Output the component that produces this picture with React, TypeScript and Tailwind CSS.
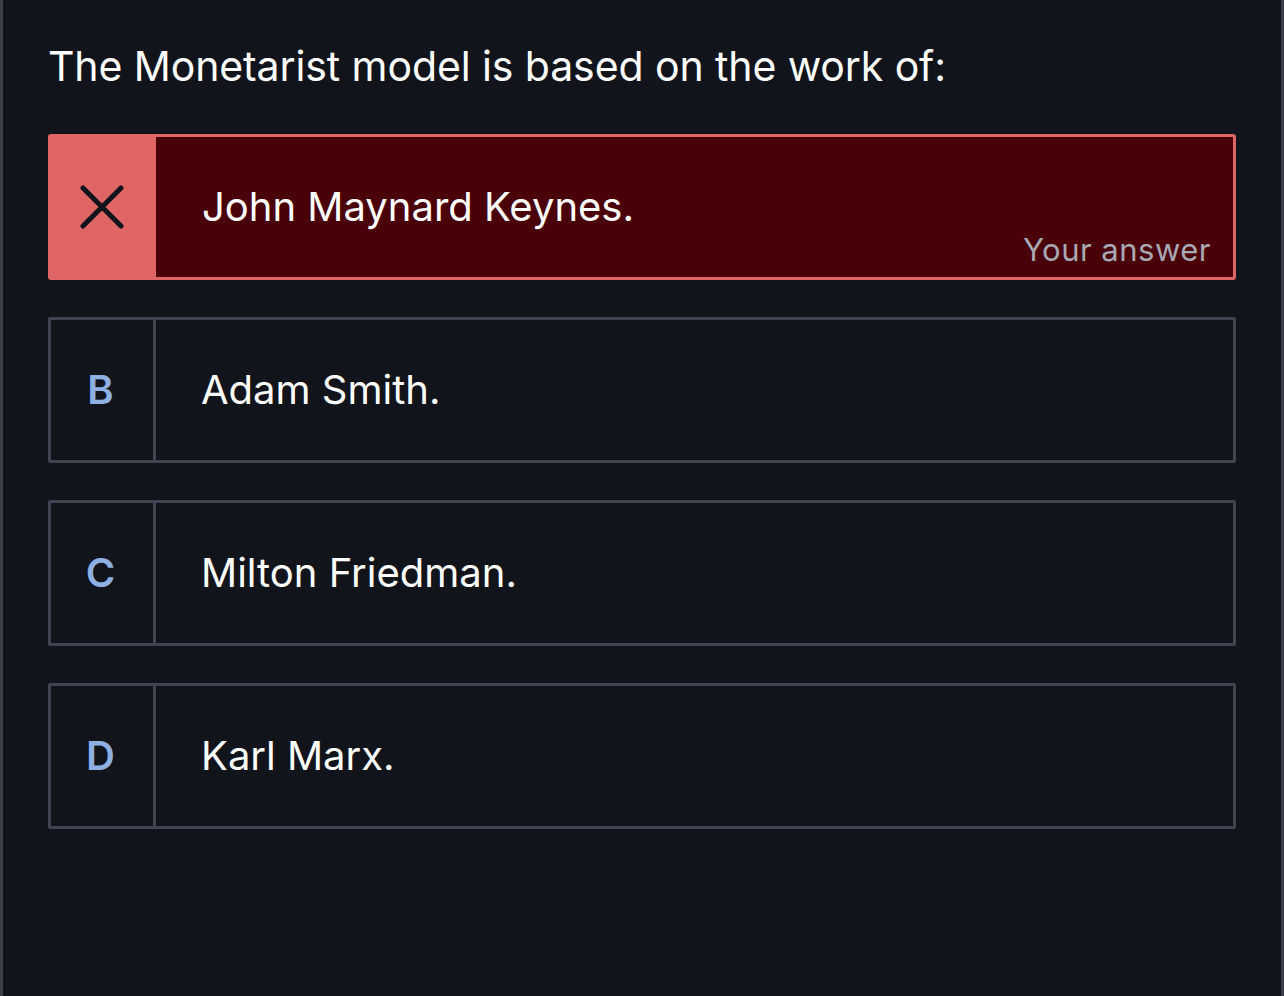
const options = [
  { key: 'A', text: 'John Maynard Keynes.', wrong: true },
  { key: 'B', text: 'Adam Smith.' },
  { key: 'C', text: 'Milton Friedman.' },
  { key: 'D', text: 'Karl Marx.' },
]

function Option({ label, text, wrong }: { label: string; text: string; wrong?: boolean }) {
  if (wrong) {
    return (
      <div className="relative flex h-[146px] rounded-[3px] border-[3px] border-[#e06666] bg-[#4a0008]">
        <div className="flex w-[105px] shrink-0 items-center justify-center pr-[4px] bg-[#e06666]">
          <svg width="44" height="44" viewBox="0 0 44 44" fill="none">
            <path d="M3 3 41 41 M41 3 3 41" stroke="#11141b" strokeWidth="5" strokeLinecap="round" />
          </svg>
        </div>
        <div className="flex flex-1 items-center pl-[46px] text-[40px] text-white">{text}</div>
        <span className="absolute bottom-[4px] right-[22px] text-[31px] tracking-[0.5px] text-[#a8a9b3]">
          Your answer
        </span>
      </div>
    )
  }
  return (
    <div className="flex h-[146px] rounded-[2px] border-[3px] border-[#3e4452]">
      <div className="flex w-[105px] shrink-0 items-center justify-center pr-[3px] border-r-[3px] border-[#3e4452] text-[40px] font-semibold text-[#8eb0e3]">
        {label}
      </div>
      <div className="flex flex-1 items-center pl-[45px] text-[40px] text-white">{text}</div>
    </div>
  )
}

export default function App() {
  return (
    <div
      className="min-h-[996px] border-x-[3px] border-[#3a3f4c] bg-[#11141b] px-[45px] pt-[38px]"
      style={{ fontFamily: 'Inter, "Noto Sans", sans-serif' }}
    >
      <h1 className="mb-[40px] text-[41px] leading-[56px] tracking-[-0.1px] text-white">
        The Monetarist model is based on the work of:
      </h1>
      <div className="flex flex-col gap-[37px]">
        {options.map((o) => (
          <Option key={o.key} label={o.key} text={o.text} wrong={o.wrong} />
        ))}
      </div>
    </div>
  )
}
